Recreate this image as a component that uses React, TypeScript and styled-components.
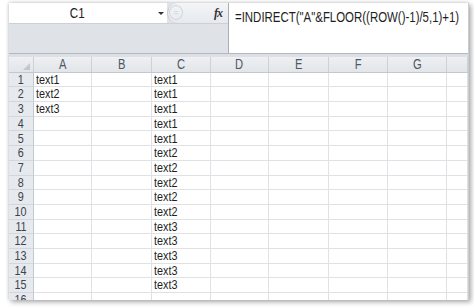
import React from "react";
import styled, { createGlobalStyle } from "styled-components";

const Global = createGlobalStyle`
  html, body { margin: 0; padding: 0; background: #ffffff; }
  body { font-family: "Liberation Sans", Arial, sans-serif; }
`;

const Page = styled.div`
  width: 474px;
  height: 307px;
  padding: 3px 5px 7px 9px;
  box-sizing: border-box;
  overflow: hidden;
`;

const Frame = styled.div`
  width: 460px;
  height: 297px;
  background: #ffffff;
  border-right: 1px solid #c9cdd2;
  box-sizing: border-box;
  box-shadow: -1px -1px 3px rgba(0, 0, 0, 0.12), 2px 2px 5px rgba(0, 0, 0, 0.35);
  display: flex;
  flex-direction: column;
  overflow: hidden;
`;

const FormulaBar = styled.div`
  display: grid;
  grid-template-columns: 219px 1px 1fr;
  height: 50px;
  flex: none;
`;

const LeftPane = styled.div`
  display: flex;
  flex-direction: column;
  background: #dfe2e7;
`;

const NameRow = styled.div`
  display: flex;
  height: 21px;
  border-bottom: 1px solid #cdd1d7;
  box-sizing: border-box;
`;

const NameBox = styled.div`
  width: 158px;
  background: #ffffff;
  display: flex;
  align-items: center;
  position: relative;
`;

const NameText = styled.div`
  width: 137px;
  display: flex;
  justify-content: center;
  font-size: 14.5px;
  line-height: 1;
  color: #222;
`;

const Arrow = styled.div`
  width: 0;
  height: 0;
  margin-left: 12px;
  border-left: 3px solid transparent;
  border-right: 3px solid transparent;
  border-top: 3px solid #333;
`;

const Pill = styled.div`
  flex: 1;
  display: flex;
  align-items: center;
  justify-content: flex-end;
  padding-right: 6px;
  background: linear-gradient(#f3f5f7, #e6e9ed);
  border-radius: 11px 0 0 11px;
  border-left: 1px solid #c5cad1;
  position: relative;
`;

const PillKnob = styled.div`
  position: absolute;
  left: 1px;
  top: 2px;
  width: 14px;
  height: 15px;
  border-radius: 50%;
  border: 1px solid #d3d7dc;
  box-sizing: border-box;
  display: flex;
  align-items: center;
  justify-content: center;
  color: #c8ccd2;
  font-size: 8px;
  line-height: 1;
`;

const Fx = styled.span`
  font-family: "Liberation Serif", "Times New Roman", serif;
  font-style: italic;
  font-weight: bold;
  font-size: 12px;
  line-height: 1;
  color: #333;
  letter-spacing: -1px;
`;

const Divider = styled.div`
  background: #a8aeb6;
`;

const FormulaArea = styled.div`
  background: #ffffff;
  padding: 6px 0 0 6px;
  font-size: 14.3px;
  color: #1e1e1e;
  white-space: nowrap;
  overflow: hidden;
`;

const Sep = styled.div`
  flex: none;
  height: 4px;
  border-top: 1px solid #b3b8bf;
  background: #dcdfe3;
  box-sizing: border-box;
`;

const COLS = "25px 58px 60px 59px 58px 60px 59px 59px 1fr";

const HeaderRow = styled.div`
  display: grid;
  grid-template-columns: ${COLS};
  height: 15.7px;
  flex: none;
  background: linear-gradient(#eef0f3, #e2e5e9);
  border-bottom: 1px solid #c3c8cf;
  box-sizing: border-box;
`;

const HeadCell = styled.div`
  display: flex;
  align-items: center;
  justify-content: center;
  border-right: 1px solid #cdd1d7;
  font-size: 14px;
  line-height: 1;
  color: #505660;
  position: relative;
  overflow: hidden;
`;

const Corner = styled.div`
  position: absolute;
  right: 3px;
  bottom: 2px;
  width: 0;
  height: 0;
  border-left: 7px solid transparent;
  border-bottom: 7px solid #c4c8ce;
`;

const Row = styled.div`
  display: grid;
  grid-template-columns: ${COLS};
  height: 14.69px;
  flex: none;
`;

const RowNum = styled.div`
  display: flex;
  align-items: center;
  justify-content: center;
  background: #e6e9ed;
  border-right: 1px solid #c3c8cf;
  border-bottom: 1px solid #d3d7dc;
  box-sizing: border-box;
  font-size: 13.5px;
  line-height: 1;
  color: #3d434c;
  overflow: hidden;
`;

const Cell = styled.div`
  display: flex;
  align-items: center;
  padding-left: 2px;
  border-right: 1px solid #dfe1e4;
  border-bottom: 1px solid #dfe1e4;
  box-sizing: border-box;
  font-size: 13.5px;
  line-height: 1;
  color: #1e1e1e;
  overflow: hidden;
  white-space: nowrap;
`;

const Squeeze = styled.span<{ $origin?: string }>`
  display: inline-block;
  transform: scaleX(0.8);
  transform-origin: ${(p) => p.$origin ?? "left center"};
  white-space: nowrap;
`;

const letters = ["A", "B", "C", "D", "E", "F", "G", ""];

const colA: Record<number, string> = { 1: "text1", 2: "text2", 3: "text3" };
const colC = (r: number) => (r <= 5 ? "text1" : r <= 10 ? "text2" : r <= 15 ? "text3" : "");

export default function App() {
  const rows = Array.from({ length: 16 }, (_, i) => i + 1);
  return (
    <Page>
      <Global />
      <Frame>
        <FormulaBar>
          <LeftPane>
            <NameRow>
              <NameBox>
                <NameText>
                  <Squeeze $origin="center">C1</Squeeze>
                </NameText>
                <Arrow />
              </NameBox>
              <Pill>
                <PillKnob>=</PillKnob>
                <Fx>fx</Fx>
              </Pill>
            </NameRow>
          </LeftPane>
          <Divider />
          <FormulaArea>
            <Squeeze>=INDIRECT("A"&amp;FLOOR((ROW()-1)/5,1)+1)</Squeeze>
          </FormulaArea>
        </FormulaBar>
        <Sep />
        <HeaderRow>
          <HeadCell>
            <Corner />
          </HeadCell>
          {letters.map((l, i) => (
            <HeadCell key={i}>
              <Squeeze $origin="center">{l}</Squeeze>
            </HeadCell>
          ))}
        </HeaderRow>
        {rows.map((r) => (
          <Row key={r}>
            <RowNum>
              <Squeeze $origin="center">{r}</Squeeze>
            </RowNum>
            <Cell>
              <Squeeze>{colA[r] ?? ""}</Squeeze>
            </Cell>
            <Cell />
            <Cell>
              <Squeeze>{colC(r)}</Squeeze>
            </Cell>
            <Cell />
            <Cell />
            <Cell />
            <Cell />
            <Cell />
          </Row>
        ))}
      </Frame>
    </Page>
  );
}
